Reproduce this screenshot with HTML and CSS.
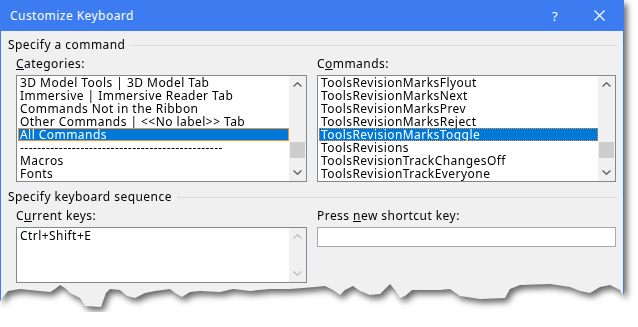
FILE: index.html
```html
<!DOCTYPE html>
<html>
<head>
    <meta charset="UTF-8">
    <title>Customize Keyboard</title>
    <link rel="stylesheet" href="styles.css">
</head>
<body>

    <div class="shot">
        <div class="dialog">
            <div class="titlebar">
                <span class="title">Customize Keyboard</span>
                <span class="help">?</span>
                <svg class="close" width="11" height="11" viewBox="0 0 11 11">
                    <path d="M0.5 0.5 L10.5 10.5 M10.5 0.5 L0.5 10.5" stroke="#fff" stroke-width="1.2" fill="none"/>
                </svg>
            </div>

            <div class="body">
                <div class="group">
                    <span>Specify a command</span>
                    <i class="rule"></i>
                </div>

                <div class="cols">
                    <div class="field">
                        <div class="label"><u>C</u>ategories:</div>
                        <div class="listbox">
                            <div class="items">
                                <div class="item">3D Model Tools | 3D Model Tab</div>
                                <div class="item">Immersive | Immersive Reader Tab</div>
                                <div class="item">Commands Not in the Ribbon</div>
                                <div class="item">Other Commands | &lt;&lt;No label&gt;&gt; Tab</div>
                                <div class="item selected">All Commands</div>
                                <div class="item">-----------------------------------------------</div>
                                <div class="item">Macros</div>
                                <div class="item">Fonts</div>
                            </div>
                            <div class="scrollbar">
                                <div class="arrow"><svg width="9" height="5" viewBox="0 0 9 5"><path d="M0.5 4.5 L4.5 0.8 L8.5 4.5" /></svg></div>
                                <div class="track"><div class="thumb"></div></div>
                                <div class="arrow"><svg width="9" height="5" viewBox="0 0 9 5"><path d="M0.5 0.5 L4.5 4.2 L8.5 0.5" /></svg></div>
                            </div>
                        </div>
                    </div>

                    <div class="field">
                        <div class="label">C<u>o</u>mmands:</div>
                        <div class="listbox">
                            <div class="items">
                                <div class="item">ToolsRevisionMarksFlyout</div>
                                <div class="item">ToolsRevisionMarksNext</div>
                                <div class="item">ToolsRevisionMarksPrev</div>
                                <div class="item">ToolsRevisionMarksReject</div>
                                <div class="item selected focus">ToolsRevisionMarksToggle</div>
                                <div class="item">ToolsRevisions</div>
                                <div class="item">ToolsRevisionTrackChangesOff</div>
                                <div class="item">ToolsRevisionTrackEveryone</div>
                            </div>
                            <div class="scrollbar">
                                <div class="arrow"><svg width="9" height="5" viewBox="0 0 9 5"><path d="M0.5 4.5 L4.5 0.8 L8.5 4.5" /></svg></div>
                                <div class="track"><div class="thumb"></div></div>
                                <div class="arrow"><svg width="9" height="5" viewBox="0 0 9 5"><path d="M0.5 0.5 L4.5 4.2 L8.5 0.5" /></svg></div>
                            </div>
                        </div>
                    </div>
                </div>

                <div class="group">
                    <span>Specify keyboard sequence</span>
                    <i class="rule"></i>
                </div>

                <div class="cols">
                    <div class="field">
                        <div class="label">C<u>u</u>rrent keys:</div>
                        <div class="listbox keys">
                            <div class="items">
                                <div class="item">Ctrl+Shift+E</div>
                            </div>
                            <div class="scrollbar disabled">
                                <div class="arrow"><svg width="9" height="5" viewBox="0 0 9 5"><path d="M0.5 4.5 L4.5 0.8 L8.5 4.5" /></svg></div>
                                <div class="track"></div>
                                <div class="arrow"><svg width="9" height="5" viewBox="0 0 9 5"><path d="M0.5 0.5 L4.5 4.2 L8.5 0.5" /></svg></div>
                            </div>
                        </div>
                    </div>

                    <div class="field">
                        <div class="label">Press <u>n</u>ew shortcut key:</div>
                        <div class="textbox"></div>
                    </div>
                </div>
            </div>
        </div>
    </div>

</body>
</html>
```

FILE: styles.css
```css
body {
    margin: 0;
    padding: 0;
    background-color: #fff;
    font-family: 'Noto Sans', 'Open Sans', sans-serif;
    font-size: 12px;
    letter-spacing: 0.45px;
    color: #000;
}

/* wrapper carries the shadow, dialog carries the torn edge */
.shot {
    width: 624px;
    filter: drop-shadow(3px 4px 3px rgba(0, 0, 0, 0.6));
}

.dialog {
    width: 624px;
    height: 312px;
    box-sizing: border-box;
    background-color: #f0f0f0;
    border: 1px solid #3c7cf0;
    border-top: none;
    clip-path: polygon(0 0, 624px 0, 624px 294px, 622px 294px, 620px 290px, 610px 285px, 600px 287px,
        590px 293px, 580px 291px, 570px 287px, 550px 284px, 520px 285px, 510px 289px, 505px 298px,
        480px 299px, 460px 296px, 450px 289px, 440px 290px, 412px 290px, 405px 296px, 400px 298px,
        395px 290px, 390px 284px, 387px 287px, 380px 294px, 370px 295px, 360px 291px, 353px 286px,
        345px 290px, 340px 295px, 333px 290px, 325px 286px, 315px 287px, 290px 289px, 270px 289px,
        250px 291px, 233px 289px, 220px 292px, 200px 291px, 190px 292px, 182px 297px, 175px 293px,
        170px 289px, 155px 291px, 145px 293px, 135px 298px, 127px 296px, 120px 290px, 110px 289px,
        106px 293px, 101px 307px, 85px 306px, 80px 298px, 70px 293px, 65px 288px, 60px 285px,
        55px 289px, 50px 292px, 40px 291px, 30px 290px, 20px 289px, 8px 291px, 3px 297px, 0 301px);
}

.titlebar {
    height: 31px;
    margin: 0 -1px;
    background-color: #3c7cf0;
    color: #fff;
    display: flex;
    align-items: center;
}

.title {
    flex-grow: 1;
    padding-left: 10px;
    font-size: 12px;
}

.help {
    font-size: 13px;
    width: 30px;
    margin-right: 24px;
    text-align: center;
}

.close {
    margin: 0 19px 0 0;
}

.body {
    padding: 0 6px 0 7px;
}

.group {
    display: flex;
    align-items: center;
    height: 16px;
    line-height: 16px;
    margin-top: 6px;
}

.group + .cols + .group {
    margin-top: 7px;
}

.rule {
    flex-grow: 1;
    height: 1px;
    margin-left: 5px;
    background-color: #dcdcdc;
}

.cols {
    display: grid;
    grid-template-columns: 291px 299px;
    column-gap: 10px;
    padding-left: 8px;
}

.label {
    height: 16px;
    line-height: 16px;
    margin: 3px 0 3px 0;
}

.listbox {
    display: flex;
    height: 107px;
    box-sizing: border-box;
    background-color: #fff;
    border: 1px solid #828790;
}

.listbox.keys {
    height: 56px;
}

.items {
    flex-grow: 1;
    min-width: 0;
}

.item {
    height: 13px;
    line-height: 13px;
    margin-left: 1px;
    padding-left: 2px;
    white-space: nowrap;
}

.keys .item {
    margin-top: 1px;
}

.item.selected {
    background-color: #0078d7;
    color: #fff;
    outline: 1px solid #f0923a;
    outline-offset: -1px;
}

.item.selected.focus {
    outline-style: dotted;
}

.scrollbar {
    width: 17px;
    display: flex;
    flex-direction: column;
    background-color: #f0f0f0;
}

.arrow {
    height: 17px;
    display: flex;
    align-items: center;
    justify-content: center;
}

.arrow svg path {
    fill: none;
    stroke: #606060;
    stroke-width: 1.4;
}

.disabled .arrow svg path {
    stroke: #c0c0c0;
}

.track {
    flex-grow: 1;
}

.thumb {
    height: 16px;
    margin: 49px 1px 0 1px;
    background-color: #cdcdcd;
}

.textbox {
    height: 20px;
    box-sizing: border-box;
    background-color: #fff;
    border: 1px solid #a8a8a8;
}
```
